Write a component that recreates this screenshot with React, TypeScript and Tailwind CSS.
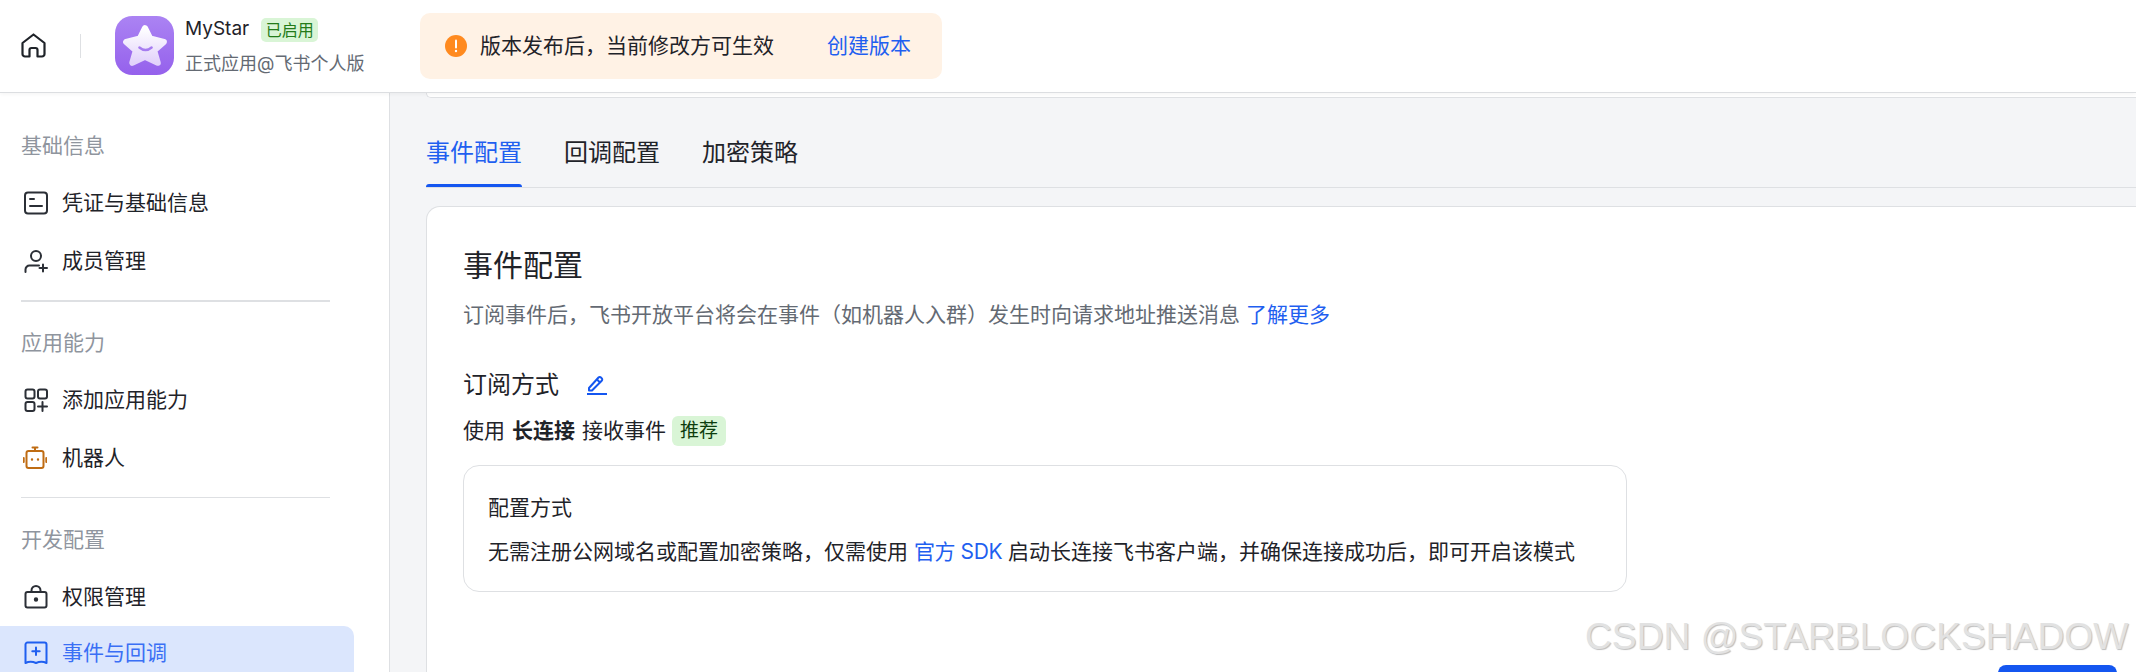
import React from 'react';

const NavIcon: React.FC<{ children: React.ReactNode; className?: string }> = ({ children, className = 'text-[#2b2f36]' }) => (
  <svg viewBox="0 0 24 24" fill="none" stroke="currentColor" strokeWidth="2" strokeLinecap="round" strokeLinejoin="round" className={`w-[24px] h-[24px] shrink-0 ${className}`}>
    {children}
  </svg>
);

const NavItem: React.FC<{ icon: React.ReactNode; label: string; active?: boolean }> = ({ icon, label, active }) => (
  <div className={`flex items-center gap-[14px] pl-[24px] text-[21px] ${active ? 'h-[54px] w-[354px] rounded-tr-[10px] bg-[#dbe6fd] text-[#3a6ff5]' : 'h-[58px] text-[#1f2329]'}`}>
    {icon}
    <span>{label}</span>
  </div>
);

const GroupLabel: React.FC<{ children: React.ReactNode }> = ({ children }) => (
  <div className="flex h-[56px] items-center pl-[21px] text-[21px] text-[#8f959e]">{children}</div>
);

const Sidebar = () => (
  <aside className="w-[390px] shrink-0 border-r border-[#dee0e3] bg-white pt-[25px]">
    <GroupLabel>基础信息</GroupLabel>
    <NavItem
      label="凭证与基础信息"
      icon={
        <NavIcon>
          <rect x="1" y="1.5" width="22" height="21" rx="3" />
          <path d="M6 8h4M6 15h12" />
        </NavIcon>
      }
    />
    <NavItem
      label="成员管理"
      icon={
        <NavIcon>
          <circle cx="12" cy="7" r="5" />
          <path d="M1.5 23v-2.5a4 4 0 0 1 4-4H15M19 15.5v7M15.5 19h7.5" />
        </NavIcon>
      }
    />
    <div className="ml-[21px] mt-[10px] h-[2px] w-[309px] bg-[#dee0e3]" />
    <div className="mt-[13px]">
      <GroupLabel>应用能力</GroupLabel>
    </div>
    <NavItem
      label="添加应用能力"
      icon={
        <NavIcon>
          <rect x="1.5" y="1.5" width="9" height="9" rx="2" />
          <rect x="14" y="1.5" width="9" height="9" rx="2" />
          <rect x="1.5" y="14" width="9" height="9" rx="2" />
          <path d="M18.5 14v9M14 18.5h9" />
        </NavIcon>
      }
    />
    <NavItem
      label="机器人"
      icon={
        <NavIcon className="text-[#bf6c13] -ml-[1px] mr-[1px]">
          <rect x="3.5" y="5" width="17" height="17" rx="2" />
          <path d="M12 2v3M9.5 1.500h5M0.700 12v4M23.300 12v4" />
          <path d="M9 13.500h.01M15 13.500h.01" strokeWidth="2.400" />
        </NavIcon>
      }
    />
    <div className="ml-[21px] mt-[10px] h-[1px] w-[309px] bg-[#dee0e3]" />
    <div className="mt-[14px]">
      <GroupLabel>开发配置</GroupLabel>
    </div>
    <NavItem
      label="权限管理"
      icon={
        <NavIcon>
          <rect x="1.500" y="7" width="21" height="15.500" rx="2" />
          <path d="M7.500 7V5.500a4.500 4.500 0 0 1 9 0V7" />
          <circle cx="12" cy="14.500" r="1.200" fill="currentColor" />
        </NavIcon>
      }
    />
    <NavItem
      active
      label="事件与回调"
      icon={
        <NavIcon className="text-[#1f5ff0]">
          <path d="M1.500 3.500a2 2 0 0 1 2-2h17a2 2 0 0 1 2 2v18.500q-5-2.500-10.500 0-5.500-2.500-10.500 0z" />
          <path d="M12 6.500v7.500M8.300 10.200h7.400" />
        </NavIcon>
      }
    />
  </aside>
);

const Header = () => (
  <header className="relative z-10 flex h-[93px] shrink-0 items-center border-b border-[#dcdee1] bg-white pb-[1px] shadow-[0_1px_4px_rgba(0,0,0,0.05)]">
    <svg viewBox="0 0 25 25" fill="none" stroke="#1f2329" strokeWidth="2.200" strokeLinejoin="round" className="ml-[21px] w-[25px] h-[25px] shrink-0">
      <path d="M1.500 10 12.500 1.500 23.500 10v11a2.500 2.500 0 0 1-2.500 2.500h-4.500v-6.500a2 2 0 0 0-2-2h-4a2 2 0 0 0-2 2v6.500H4a2.500 2.500 0 0 1-2.500-2.500z" />
    </svg>
    <div className="ml-[34px] h-[24px] w-[1px] bg-[#dee0e3]" />
    <svg viewBox="0 0 58 58" className="ml-[34px] w-[59px] h-[59px] shrink-0">
      <defs>
        <linearGradient id="appBg" x1="0" y1="0" x2="0" y2="1">
          <stop offset="0" stopColor="#ab83f3" />
          <stop offset="1" stopColor="#9561ec" />
        </linearGradient>
        <linearGradient id="appStar" x1="0" y1="0" x2="0" y2="1">
          <stop offset="0" stopColor="#ffffff" />
          <stop offset="1" stopColor="#e2d2fb" />
        </linearGradient>
      </defs>
      <rect width="58" height="58" rx="17" fill="url(#appBg)" />
      <path d="M29.500 12 34.500 22 48 25.500 38.500 34 42 46 29.500 40 17 46 20.500 34 11 25.500 24.500 22Z" fill="url(#appStar)" stroke="url(#appStar)" strokeWidth="6" strokeLinejoin="round" />
      <path d="M24 31q6 5 12 0" fill="none" stroke="#a67bf0" strokeWidth="2.400" strokeLinecap="round" />
    </svg>
    <div className="ml-[11px] flex w-[200px] flex-col">
      <div className="flex h-[30px] items-center gap-[12px]">
        <span className="text-[19px] text-[#1f2329]">MyStar</span>
        <span className="flex h-[24px] w-[57px] items-center justify-center rounded-[5px] bg-[#d9f5d6] text-[16px] text-[#237b19]">已启用</span>
      </div>
      <div className="mt-[6px] whitespace-nowrap text-[18px] leading-[26px] text-[#646a73]">正式应用@飞书个人版</div>
    </div>
    <div className="ml-[35px] flex h-[66px] w-[522px] items-center rounded-[10px] bg-[#fff2e5] pl-[25px]">
      <svg viewBox="0 0 22 22" className="w-[22px] h-[22px] shrink-0">
        <circle cx="11" cy="11" r="11" fill="#ff8a1f" />
        <path d="M11 5.500v7" stroke="#fff" strokeWidth="2" strokeLinecap="round" />
        <circle cx="11" cy="16" r="1.200" fill="#fff" />
      </svg>
      <span className="ml-[13px] text-[21px] text-[#1f2329]">版本发布后，当前修改方可生效</span>
      <span className="ml-[53px] text-[21px] text-[#1f5ff0]">创建版本</span>
    </div>
  </header>
);

const Main = () => (
  <main className="flex-1 overflow-hidden bg-[#f4f5f7] pl-[36px]">
    <div className="h-[5px] rounded-bl-[12px] border-b border-l border-[#dee0e3] bg-white" />
    <div className="flex h-[90px] items-end gap-[42px] border-b border-[#dee0e3] text-[24px]">
      <div className="flex flex-col text-[#1f5ff0]">
        <span className="leading-[32px]">事件配置</span>
        <div className="mt-[15px] h-[3px] rounded-t-[3px] bg-[#1456f0]" />
      </div>
      <div className="flex flex-col text-[#1f2329]">
        <span className="leading-[32px]">回调配置</span>
        <div className="mt-[15px] h-[3px]" />
      </div>
      <div className="flex flex-col text-[#1f2329]">
        <span className="leading-[32px]">加密策略</span>
        <div className="mt-[15px] h-[3px]" />
      </div>
    </div>
    <section className="mt-[18px] h-[600px] rounded-tl-[14px] border-l border-t border-[#dee0e3] bg-white pl-[36px] pr-[19px] pt-[40px]">
      <h1 className="text-[30px] font-normal leading-[36px] text-[#1f2329]">事件配置</h1>
      <p className="mt-[17px] text-[21px] leading-[30px] text-[#646a73]">
        订阅事件后，飞书开放平台将会在事件（如机器人入群）发生时向请求地址推送消息 <span className="text-[#1f5ff0]">了解更多</span>
      </p>
      <div className="mt-[39px] flex h-[32px] items-center">
        <span className="text-[24px] text-[#1f2329]">订阅方式</span>
        <svg viewBox="0 0 20 20" fill="none" stroke="#1456f0" strokeWidth="2" strokeLinejoin="round" className="ml-[28px] w-[20px] h-[20px]">
          <path d="M2 13 11.500 2.500a1.700 1.700 0 0 1 2.500 0l.7.7a1.700 1.700 0 0 1 0 2.500L5 15.500H2z" />
          <path d="M10 4.500l3 3M0 19h20" />
        </svg>
      </div>
      <div className="mt-[15px] flex h-[30px] items-center text-[21px] text-[#1f2329]">
        <span>使用</span>
        <span className="ml-[7px] font-bold">长连接</span>
        <span className="ml-[7px]">接收事件</span>
        <span className="ml-[6px] flex h-[30px] w-[54px] items-center justify-center rounded-[6px] bg-[#d9f5d6] text-[19px] text-[#0d3d0d]">推荐</span>
      </div>
      <div className="mt-[19px] h-[127px] w-[1164px] rounded-[16px] border border-[#dee0e3] px-[24px] pt-[27px] text-[21px] leading-[30px] text-[#1f2329]">
        <div>配置方式</div>
        <div className="mt-[14px]">
          无需注册公网域名或配置加密策略，仅需使用 <span className="tracking-[-0.4px] text-[#1f5ff0]">官方 SDK</span> 启动长连接飞书客户端，并确保连接成功后，即可开启该模式
        </div>
      </div>
      <div className="mt-[73px] flex justify-end">
        <div className="h-[42px] w-[119px] rounded-[8px] bg-[#1456f0]" />
      </div>
    </section>
  </main>
);

export default function App() {
  return (
    <div className="relative flex h-[672px] w-[2136px] flex-col overflow-hidden bg-white font-['Inter','Noto_Sans_CJK_SC',sans-serif]">
      <Header />
      <div className="flex min-h-0 flex-1">
        <Sidebar />
        <Main />
      </div>
      {/* csdn watermark sits over the page */}
      <div className="absolute left-[1585px] top-[613px] whitespace-nowrap font-['Liberation_Sans',sans-serif] text-[37.2px] leading-[46px] text-[#e2e2e2] [text-shadow:1px_1px_1px_#bdbdbd]">
        CSDN @STARBLOCKSHADOW
      </div>
    </div>
  );
}
